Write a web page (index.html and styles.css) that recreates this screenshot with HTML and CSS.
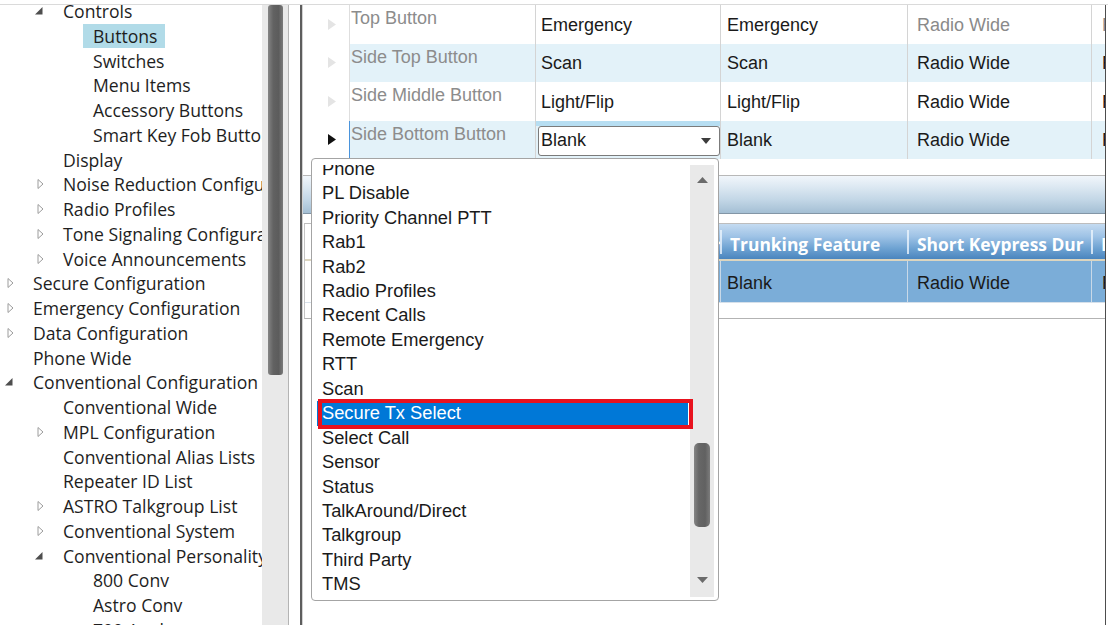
FILE: index.html
```html
<!DOCTYPE html>
<html lang="en">
<head>
<meta charset="utf-8">
<title>Buttons</title>
<link rel="stylesheet" href="styles.css">
</head>
<body>
<div class="app">
  <div class="tree">
    <ul class="tree-list">
      <li class="node l1"><span class="tw"><svg width="14" height="12" viewBox="0 0 14 12"><path d="M9.5 2V9.5H2Z" fill="#4e4e4e"/></svg></span><span>Controls</span></li>
      <li class="node l2"><span class="tw"></span><span class="sel">Buttons</span></li>
      <li class="node l2"><span class="tw"></span><span>Switches</span></li>
      <li class="node l2"><span class="tw"></span><span>Menu Items</span></li>
      <li class="node l2"><span class="tw"></span><span>Accessory Buttons</span></li>
      <li class="node l2"><span class="tw"></span><span>Smart Key Fob Buttons</span></li>
      <li class="node l1"><span class="tw"></span><span>Display</span></li>
      <li class="node l1"><span class="tw"><svg width="14" height="12" viewBox="0 0 14 12"><path d="M5 1.5 10 6 5 10.5Z" fill="none" stroke="#9c9c9c"/></svg></span><span>Noise Reduction Configuration</span></li>
      <li class="node l1"><span class="tw"><svg width="14" height="12" viewBox="0 0 14 12"><path d="M5 1.5 10 6 5 10.5Z" fill="none" stroke="#9c9c9c"/></svg></span><span>Radio Profiles</span></li>
      <li class="node l1"><span class="tw"><svg width="14" height="12" viewBox="0 0 14 12"><path d="M5 1.5 10 6 5 10.5Z" fill="none" stroke="#9c9c9c"/></svg></span><span>Tone Signaling Configuration</span></li>
      <li class="node l1"><span class="tw"><svg width="14" height="12" viewBox="0 0 14 12"><path d="M5 1.5 10 6 5 10.5Z" fill="none" stroke="#9c9c9c"/></svg></span><span>Voice Announcements</span></li>
      <li class="node l0"><span class="tw"><svg width="14" height="12" viewBox="0 0 14 12"><path d="M5 1.5 10 6 5 10.5Z" fill="none" stroke="#9c9c9c"/></svg></span><span>Secure Configuration</span></li>
      <li class="node l0"><span class="tw"><svg width="14" height="12" viewBox="0 0 14 12"><path d="M5 1.5 10 6 5 10.5Z" fill="none" stroke="#9c9c9c"/></svg></span><span>Emergency Configuration</span></li>
      <li class="node l0"><span class="tw"><svg width="14" height="12" viewBox="0 0 14 12"><path d="M5 1.5 10 6 5 10.5Z" fill="none" stroke="#9c9c9c"/></svg></span><span>Data Configuration</span></li>
      <li class="node l0"><span class="tw"></span><span>Phone Wide</span></li>
      <li class="node l0"><span class="tw"><svg width="14" height="12" viewBox="0 0 14 12"><path d="M9.5 2V9.5H2Z" fill="#4e4e4e"/></svg></span><span>Conventional Configuration</span></li>
      <li class="node l1"><span class="tw"></span><span>Conventional Wide</span></li>
      <li class="node l1"><span class="tw"><svg width="14" height="12" viewBox="0 0 14 12"><path d="M5 1.5 10 6 5 10.5Z" fill="none" stroke="#9c9c9c"/></svg></span><span>MPL Configuration</span></li>
      <li class="node l1"><span class="tw"></span><span>Conventional Alias Lists</span></li>
      <li class="node l1"><span class="tw"></span><span>Repeater ID List</span></li>
      <li class="node l1"><span class="tw"><svg width="14" height="12" viewBox="0 0 14 12"><path d="M5 1.5 10 6 5 10.5Z" fill="none" stroke="#9c9c9c"/></svg></span><span>ASTRO Talkgroup List</span></li>
      <li class="node l1"><span class="tw"><svg width="14" height="12" viewBox="0 0 14 12"><path d="M5 1.5 10 6 5 10.5Z" fill="none" stroke="#9c9c9c"/></svg></span><span>Conventional System</span></li>
      <li class="node l1"><span class="tw"><svg width="14" height="12" viewBox="0 0 14 12"><path d="M9.5 2V9.5H2Z" fill="#4e4e4e"/></svg></span><span>Conventional Personality</span></li>
      <li class="node l2"><span class="tw"></span><span>800 Conv</span></li>
      <li class="node l2"><span class="tw"></span><span>Astro Conv</span></li>
      <li class="node l2"><span class="tw"></span><span>700 Analog</span></li>
    </ul>
  </div>
  <div class="vscroll"><div class="thumb"></div></div>
  <div class="gap"></div>
  <div class="splitter"></div>
  <div class="main">
    <div class="upper">
      <div class="row">
        <div class="rh"><svg width="8" height="11" viewBox="0 0 8 11"><path d="M0 0 8 5.5 0 11Z" fill="#e4e4e4"/></svg></div>
        <div class="c1">Top Button</div>
        <div class="c p2">Emergency</div>
        <div class="c p3">Emergency</div>
        <div class="c p4 dim">Radio Wide</div>
        <div class="c p5 dim">Radio Wide</div>
      </div>
      <div class="row alt">
        <div class="rh"><svg width="8" height="11" viewBox="0 0 8 11"><path d="M0 0 8 5.5 0 11Z" fill="#e4e4e4"/></svg></div>
        <div class="c1">Side Top Button</div>
        <div class="c p2">Scan</div>
        <div class="c p3">Scan</div>
        <div class="c p4">Radio Wide</div>
        <div class="c p5">Radio Wide</div>
      </div>
      <div class="row">
        <div class="rh"><svg width="8" height="11" viewBox="0 0 8 11"><path d="M0 0 8 5.5 0 11Z" fill="#e4e4e4"/></svg></div>
        <div class="c1">Side Middle Button</div>
        <div class="c p2">Light/Flip</div>
        <div class="c p3">Light/Flip</div>
        <div class="c p4">Radio Wide</div>
        <div class="c p5">Radio Wide</div>
      </div>
      <div class="row alt">
        <div class="rh"><svg width="8" height="11" viewBox="0 0 8 11"><path d="M0 0 8 5.5 0 11Z" fill="#111"/></svg></div>
        <div class="c1 cur">Side Bottom Button</div>
        <div class="c edit-cell">
          <div class="combo"><span>Blank</span><svg width="10" height="6" viewBox="0 0 10 6"><path d="M0 0H10L5 6Z" fill="#3c3c3c"/></svg></div>
        </div>
        <div class="c p3">Blank</div>
        <div class="c p4">Radio Wide</div>
        <div class="c p5">Radio Wide</div>
      </div>
    </div>

    <div class="groupbar"></div>

    <div class="lower">
      <div class="lrow hdr">
        <div class="lrh"></div>
        <div class="hc"><i class="hs"></i>Button</div>
        <div class="hc"><i class="hs"></i>Conventional Feature</div>
        <div class="hc"><i class="hs"></i>Trunking Feature</div>
        <div class="hc"><i class="hs"></i>Short Keypress Dur</div>
        <div class="hc"><i class="hs"></i>Long Keypress Dur</div>
      </div>
      <div class="lrow data">
        <div class="lrh"></div>
        <div class="dc p2">Side Bottom Button</div>
        <div class="dc p2">Blank</div>
        <div class="dc p3">Blank</div>
        <div class="dc p4">Radio Wide</div>
        <div class="dc p5">Radio Wide</div>
      </div>
    </div>
  </div>
</div>

<div class="popup">
  <ul class="opts">
    <li>Phone</li>
    <li>PL Disable</li>
    <li>Priority Channel PTT</li>
    <li>Rab1</li>
    <li>Rab2</li>
    <li>Radio Profiles</li>
    <li>Recent Calls</li>
    <li>Remote Emergency</li>
    <li>RTT</li>
    <li>Scan</li>
    <li class="on">Secure Tx Select</li>
    <li>Select Call</li>
    <li>Sensor</li>
    <li>Status</li>
    <li>TalkAround/Direct</li>
    <li>Talkgroup</li>
    <li>Third Party</li>
    <li>TMS</li>
  </ul>
  <div class="ptrack">
    <div class="pbtn"><svg width="11" height="6" viewBox="0 0 11 6"><path d="M0 6 5.5 0 11 6Z" fill="#6b6b6b"/></svg></div>
    <div class="pthumb"></div>
    <div class="pbtn down"><svg width="11" height="6" viewBox="0 0 11 6"><path d="M0 0H11L5.5 6Z" fill="#6b6b6b"/></svg></div>
  </div>
  <div class="mark"></div>
</div>
</body>
</html>
```

FILE: styles.css
```css
* { box-sizing: border-box; }
html, body { margin: 0; padding: 0; }
body {
  width: 1108px;
  height: 625px;
  overflow: hidden;
  background: #fff;
  padding-top: 4px;
  font-family: "Liberation Sans", Arial, sans-serif;
  color: #1a1a1a;
}
.app {
  display: flex;
  height: 621px;
  border-top: 1px solid #dadada;
}

/* tree */
.tree {
  width: 262px;
  flex-shrink: 0;
  overflow: hidden;
  font-family: "Open Sans", sans-serif;
  font-size: 17.6px;
  color: #1e1e1e;
}
.tree-list { list-style: none; margin: -6.3px 0 0; padding: 0; }
.node {
  display: flex;
  align-items: center;
  height: 24.75px;
  white-space: nowrap;
}
.l0 { padding-left: 3px; }
.l1 { padding-left: 33px; }
.l2 { padding-left: 63px; }
.tw { width: 30px; flex-shrink: 0; display: flex; align-items: center; }
.sel {
  background: #b1dbe8;
  margin-left: -10px;
  padding: 0 8px 0 10px;
  line-height: 24px;
}
.vscroll {
  width: 27px;
  flex-shrink: 0;
  background: #e9e9e9;
  border-right: 1px solid #b4b4b4;
  padding-left: 6px;
}
.thumb {
  width: 15px;
  height: 370px;
  border-radius: 3px;
  background: linear-gradient(to right, #858585, #626262 35%, #5c5c5c 70%, #7a7a7a);
}
.gap { width: 11px; flex-shrink: 0; }
.splitter { width: 2px; flex-shrink: 0; background: #5d5d5d; }

/* main */
.main {
  flex: 1;
  margin-right: 2px;
  border-left: 1px solid #d2d2d2;
  border-right: 1px solid #4d4d4d;
  font-size: 18px;
}
.row {
  display: grid;
  grid-template-columns: 46px 186px 185px 187px 184px 1fr;
  height: 38.5px;
}
.row.alt { background: #e3f2f9; }
.rh {
  background: #fff;
  display: flex;
  align-items: center;
  padding-left: 25px;
}
.c1 {
  border-left: 1px solid #dedede;
  color: #8c8c8c;
  padding: 3px 0 0 1px;
  line-height: 21px;
  white-space: nowrap;
  overflow: hidden;
}
.c1.cur { border-left-color: #4a94dc; }
.c {
  border-left: 1px solid #d4d4d4;
  display: flex;
  align-items: center;
  padding-top: 1.5px;
  white-space: nowrap;
  overflow: hidden;
}
.p2 { padding-left: 5px; }
.p3 { padding-left: 6px; }
.p4 { padding-left: 9px; }
.p5 { padding-left: 10px; }
.dim { color: #8a8a8a; }
.c.edit-cell {
  padding: 5px 0 3.5px 2px;
  align-items: stretch;
  background: linear-gradient(#b7def2 0, #b7def2 5px, transparent 5px);
}
.combo {
  flex: 1;
  display: flex;
  align-items: center;
  justify-content: space-between;
  background: #fff;
  border: 1px solid #7b7b7b;
  border-radius: 3px;
  padding: 0 8px 0 2px;
}

.groupbar {
  margin-top: 16px;
  height: 39px;
  border-top: 1px solid #b8b8b8;
  border-bottom: 1px solid #8396a6;
  background: linear-gradient(#f1f6fb, #dce8f2 30%, #c2d6e6 65%, #a4bfd4);
}

.lower {
  margin-top: 9px;
  margin-left: 1px;
  border-left: 1px solid #c4c4c4;
  border-top: 1px solid #bdbdbd;
  border-bottom: 1px solid #b3b3b3;
  height: 96px;
}
.lrow {
  display: grid;
  grid-template-columns: 44px 186px 185px 187px 184px 1fr;
}
.lrh { background: #fff; }
.hdr {
  height: 37px;
  border-bottom: 2px solid #dcd5bf;
}
.hc {
  display: flex;
  align-items: center;
  padding-top: 4px;
  background: linear-gradient(#c4dbf1, #9fc3e6 35%, #70a4d3 68%, #4a85be);
  color: #fff;
  font-family: "Open Sans", sans-serif;
  font-weight: 700;
  font-size: 17.4px;
  white-space: nowrap;
  overflow: hidden;
}
.hs {
  width: 2px;
  height: 24px;
  margin: -4px 8px 0 0;
  flex-shrink: 0;
  background: rgba(235, 244, 252, 0.8);
}
.data {
  height: 42px;
  border-bottom: 1px solid #d6e0ea;
}
.dc {
  background: #7badd8;
  border-left: 1px solid #c9d9e8;
  display: flex;
  align-items: center;
  padding-top: 4px;
  white-space: nowrap;
  overflow: hidden;
}

/* dropdown popup */
.popup {
  position: absolute;
  left: 311px;
  top: 158px;
  width: 408px;
  height: 443px;
  border: 1px solid #a4a4a4;
  border-radius: 4px;
  background: #fff;
  padding: 6px 4px 3px 5px;
  display: flex;
  gap: 2px;
  font-size: 18.3px;
  color: #1a1a1a;
}
.opts {
  list-style: none;
  margin: 0;
  padding: 0;
  flex: 1;
  overflow: hidden;
}
.opts li {
  height: 24.44px;
  line-height: 24.44px;
  padding-left: 5px;
  white-space: nowrap;
}
.opts li:first-child { margin-top: -8.2px; }
.opts li.on { background: #0078d7; color: #fff; }
.ptrack {
  width: 24px;
  flex-shrink: 0;
  background: #e9e9e9;
  display: flex;
  flex-direction: column;
}
.pbtn {
  height: 30px;
  display: flex;
  align-items: center;
  justify-content: center;
}
.pbtn.down { margin-top: auto; height: 34px; }
.pthumb {
  width: 16px;
  height: 84px;
  margin: 248px auto 0;
  border-radius: 5px;
  background: linear-gradient(to right, #858585, #676767 30%, #616161 70%, #7c7c7c);
}
.mark {
  position: absolute;
  left: 6px;
  top: 240px;
  width: 375px;
  height: 30px;
  border: 4px solid #e8121e;
}
```
